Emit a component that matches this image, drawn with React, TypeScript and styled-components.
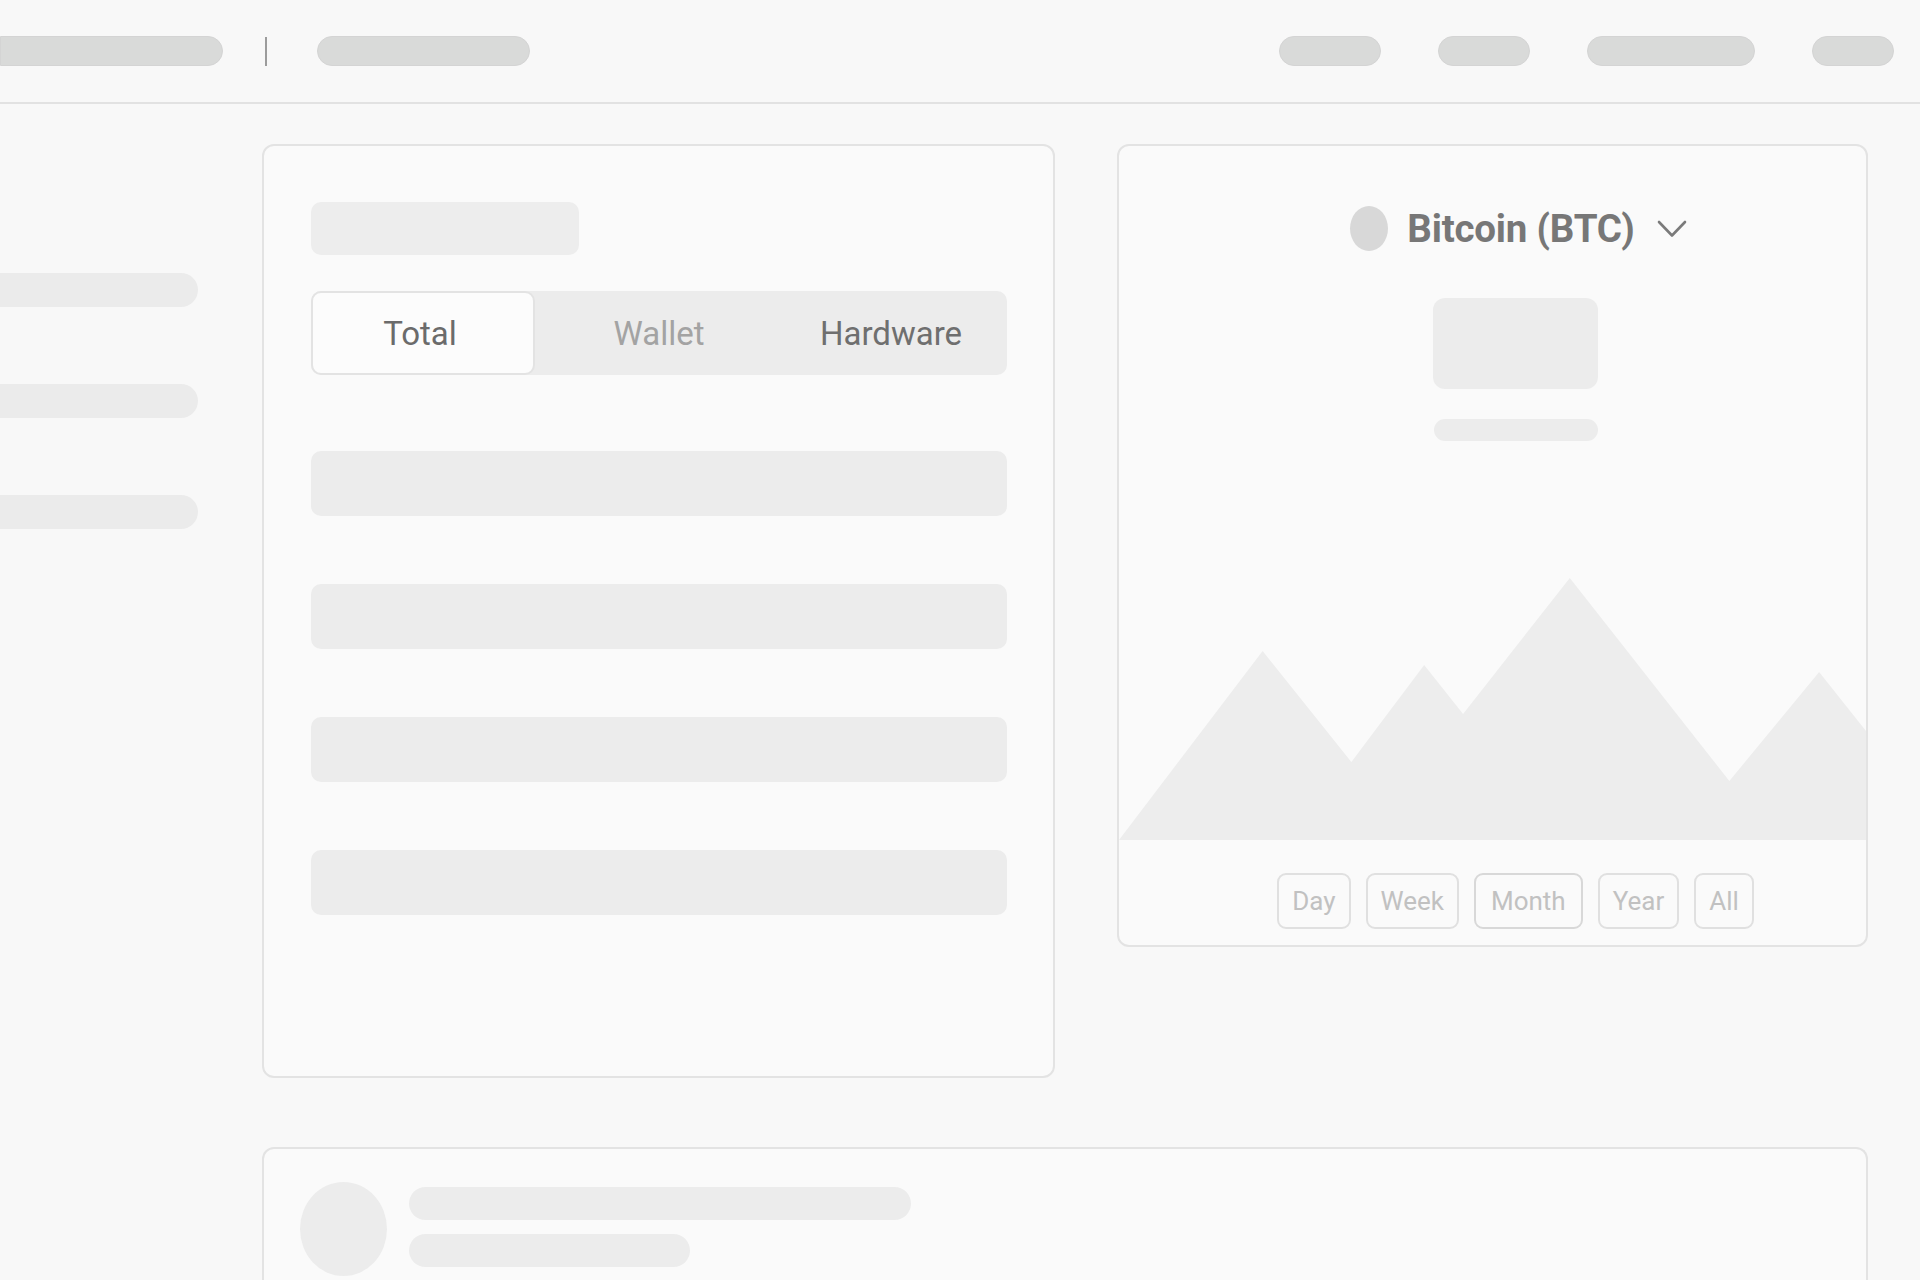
import styled, { createGlobalStyle } from "styled-components";

const GlobalStyle = createGlobalStyle`
  html, body {
    margin: 0;
    padding: 0;
    overflow: hidden;
    background: #f8f8f8;
    font-family: Roboto, "Liberation Sans", Arial, sans-serif;
  }
  * {
    box-sizing: border-box;
  }
`;

const periods = ["Day", "Week", "Month", "Year", "All"];
const tabs = [
  { label: "Total", color: "#6b6b6b", active: true },
  { label: "Wallet", color: "#a3a3a3", active: false },
  { label: "Hardware", color: "#6f6f6f", active: false },
];

const Chevron = () => (
  <svg width="30" height="18" viewBox="0 0 30 18" fill="none">
    <path d="M2 2 L15 15.5 L28 2" stroke="#7a7a7a" strokeWidth="2.6" strokeLinecap="round" strokeLinejoin="round" />
  </svg>
);

const App = () => {
  return (
    <Page>
      <GlobalStyle />
      <Header>
        <HeaderGroup>
          <NavPill $w={223} $flat />
          <Divider />
          <NavPill $w={213} />
        </HeaderGroup>
        <HeaderGroup $gap={57}>
          <NavPill $w={102} />
          <NavPill $w={92} />
          <NavPill $w={168} />
          <NavPill $w={82} />
        </HeaderGroup>
      </Header>

      <Body>
        <Sidebar>
          <SideItem />
          <SideItem />
          <SideItem />
        </Sidebar>

        <BalanceCard>
          <TitleBlock />
          <Tabs>
            {tabs.map((t) => (
              <Tab key={t.label} $active={t.active} $color={t.color}>
                {t.label}
              </Tab>
            ))}
          </Tabs>
          <Rows>
            {[0, 1, 2, 3].map((i) => (
              <RowBlock key={i} />
            ))}
          </Rows>
        </BalanceCard>

        <ChartCard>
          <CoinHeader>
            <CoinDot />
            <CoinName>Bitcoin (BTC)</CoinName>
            <Chevron />
          </CoinHeader>
          <PriceBlock />
          <PriceSub />
          <ChartWrap>
            <svg width="100%" height="280" viewBox="0 0 749 280" preserveAspectRatio="none">
              <polygon
                points="0,280 144,91 233,202 306,105 345,154 452,18 612,221 702,112 749,171 749,280"
                fill="#ededed"
              />
            </svg>
          </ChartWrap>
          <Periods>
            {periods.map((p) => (
              <PeriodButton key={p} $strong={p === "Month"}>
                {p}
              </PeriodButton>
            ))}
          </Periods>
        </ChartCard>

        <ActivityCard>
          <Avatar />
          <Lines>
            <Line $w={502} />
            <Line $w={281} />
          </Lines>
        </ActivityCard>
      </Body>
    </Page>
  );
};

export default App;

const Page = styled.div`
  width: 1920px;
  height: 1280px;
  overflow: hidden;
`;

const Header = styled.header`
  display: flex;
  align-items: center;
  justify-content: space-between;
  height: 104px;
  padding: 0 26px 0 0;
  border-bottom: 2px solid #e2e2e2;
`;

const HeaderGroup = styled.div<{ $gap?: number }>`
  display: flex;
  align-items: center;
  gap: ${(p) => p.$gap ?? 0}px;
`;

const NavPill = styled.div<{ $w: number; $flat?: boolean }>`
  width: ${(p) => p.$w}px;
  height: 30px;
  border-radius: ${(p) => (p.$flat ? "0 15px 15px 0" : "15px")};
  background: #d9dad9;
  border: 1px solid #d4d4d4;
`;

const Divider = styled.div`
  width: 2px;
  height: 29px;
  margin: 0 50px 0 42px;
  background: #9c9c9c;
`;

const Body = styled.main`
  display: grid;
  grid-template-columns: 198px 793px 749px;
  column-gap: 64px;
  row-gap: 69px;
  align-items: start;
  padding-top: 40px;
`;

const Sidebar = styled.nav`
  display: flex;
  flex-direction: column;
  gap: 77px;
  padding-top: 129px;
`;

const SideItem = styled.div`
  height: 34px;
  border-radius: 0 17px 17px 0;
  background: #ebebeb;
`;

const Card = styled.section`
  background: #fafafa;
  border: 2px solid #e3e3e3;
  border-radius: 12px;
`;

const BalanceCard = styled(Card)`
  height: 934px;
  display: flex;
  flex-direction: column;
  padding: 56px 46px 0 47px;
`;

const TitleBlock = styled.div`
  width: 268px;
  height: 53px;
  border-radius: 10px;
  background: #ededed;
`;

const Tabs = styled.div`
  margin-top: 36px;
  height: 84px;
  display: grid;
  grid-template-columns: repeat(3, 1fr);
  background: #ececec;
  border-radius: 10px;
`;

const Tab = styled.div<{ $active: boolean; $color: string }>`
  display: flex;
  align-items: center;
  justify-content: center;
  font-size: 33px;
  color: ${(p) => p.$color};
  background: ${(p) => (p.$active ? "#fcfcfc" : "transparent")};
  border: 2px solid ${(p) => (p.$active ? "#e3e3e3" : "transparent")};
  border-radius: 10px;
  margin-right: ${(p) => (p.$active ? "8px" : "0")};
  padding-right: ${(p) => (p.$active ? "6px" : "0")};
`;

const Rows = styled.div`
  margin-top: 76px;
  display: flex;
  flex-direction: column;
  gap: 68px;
`;

const RowBlock = styled.div`
  height: 65px;
  border-radius: 10px;
  background: #ececec;
`;

const ChartCard = styled(Card)`
  height: 803px;
  display: flex;
  flex-direction: column;
  align-items: center;
  padding: 60px 0 0;
  margin-left: -2px;
`;

const CoinHeader = styled.div`
  display: flex;
  align-items: center;
  height: 45px;
  padding-left: 52px;
`;

const CoinDot = styled.div`
  width: 38px;
  height: 45px;
  border-radius: 50%;
  background: #d8d8d8;
  margin-right: 19px;
`;

const CoinName = styled.h2`
  margin: 0 22px 0 0;
  font-size: 38.5px;
  font-weight: 700;
  color: #777777;
  letter-spacing: -0.2px;
`;

const PriceBlock = styled.div`
  margin-top: 47px;
  margin-left: 46px;
  width: 165px;
  height: 91px;
  border-radius: 12px;
  background: #ececec;
`;

const PriceSub = styled.div`
  margin-top: 30px;
  margin-left: 46px;
  width: 164px;
  height: 22px;
  border-radius: 11px;
  background: #ececec;
`;

const ChartWrap = styled.div`
  align-self: stretch;
  margin-top: 119px;
  height: 280px;
  svg {
    display: block;
  }
`;

const Periods = styled.div`
  display: flex;
  gap: 15px;
  margin-top: 33px;
  padding-left: 46px;
`;

const PeriodButton = styled.button<{ $strong: boolean }>`
  height: 56px;
  padding: 0 ${(p) => (p.$strong ? 15 : 13)}px;
  font-family: Roboto, "Liberation Sans", Arial, sans-serif;
  font-size: 26px;
  color: #c1c1c1;
  background: transparent;
  border: 2px solid ${(p) => (p.$strong ? "#d8d8d8" : "#e0e0e0")};
  border-radius: 9px;
`;

const ActivityCard = styled(Card)`
  grid-column: 2 / span 2;
  height: 220px;
  display: flex;
  align-items: flex-start;
  gap: 22px;
  padding: 33px 0 0 36px;
  border-bottom: none;
  border-radius: 12px 12px 0 0;
`;

const Avatar = styled.div`
  width: 87px;
  height: 94px;
  border-radius: 50%;
  background: #ececec;
`;

const Lines = styled.div`
  display: flex;
  flex-direction: column;
  gap: 14px;
  padding-top: 5px;
`;

const Line = styled.div<{ $w: number }>`
  width: ${(p) => p.$w}px;
  height: 33px;
  border-radius: 17px;
  background: #ececec;
`;
